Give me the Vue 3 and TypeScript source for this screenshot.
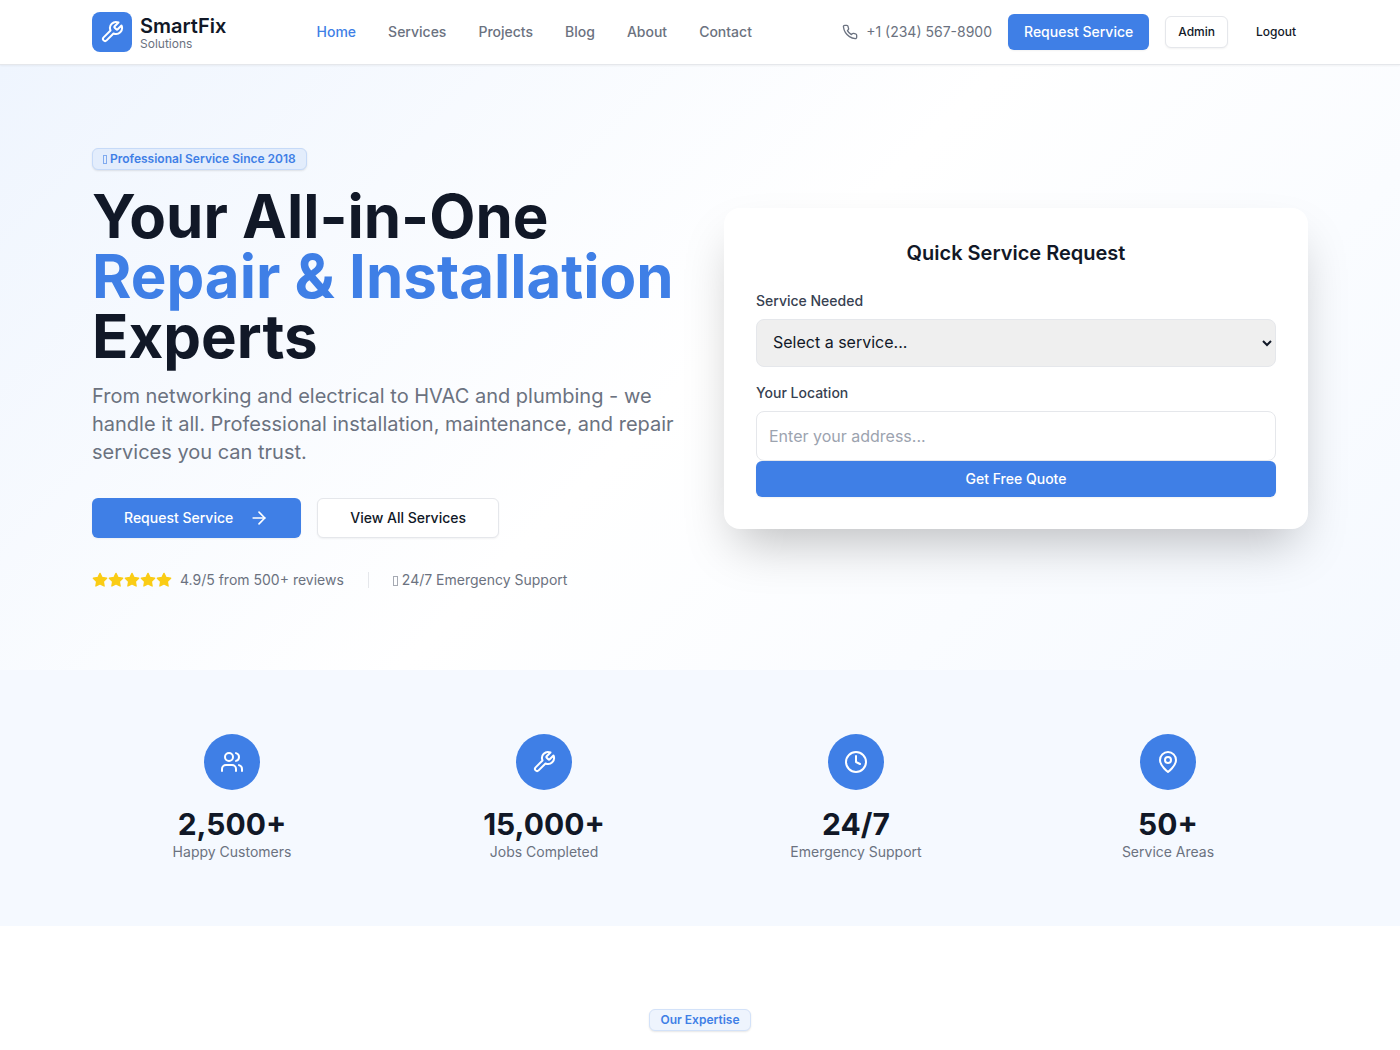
<template>
  <div class="page">
    <header class="site-header">
      <div class="container header-row">
        <a class="brand" href="#">
          <span class="brand-mark">
            <svg width="24" height="24" viewBox="0 0 24 24" class="icon"><path :d="wrenchPath" /></svg>
          </span>
          <span class="brand-text">
            <span class="brand-name">SmartFix</span>
            <span class="brand-sub">Solutions</span>
          </span>
        </a>
        <nav class="main-nav">
          <a
            v-for="(item, i) in navItems"
            :key="item"
            href="#"
            :class="['nav-link', { active: i === 0 }]"
          >{{ item }}</a>
        </nav>
        <div class="header-actions">
          <span class="phone">
            <svg width="16" height="16" viewBox="0 0 24 24" class="icon"><path :d="phonePath" /></svg>
            +1 (234) 567-8900
          </span>
          <button class="btn btn-primary btn-header">Request Service</button>
          <button class="btn btn-outline btn-small">Admin</button>
          <button class="btn btn-ghost btn-small">Logout</button>
        </div>
      </div>
    </header>

    <section class="hero">
      <div class="container hero-grid">
        <div class="hero-copy">
          <div class="badge-line">
            <span class="badge"><i class="tofu tofu-small"></i>Professional Service Since 2018</span>
          </div>
          <h1 class="hero-title">
            Your All-in-One
            <span class="accent">Repair &amp; Installation</span>
            Experts
          </h1>
          <p class="hero-text">
            From networking and electrical to HVAC and plumbing - we handle it all. Professional
            installation, maintenance, and repair services you can trust.
          </p>
          <div class="hero-buttons">
            <button class="btn btn-primary btn-large">
              Request Service
              <svg width="20" height="20" viewBox="0 0 24 24" class="icon"><path d="M5 12h14" /><path d="m12 5 7 7-7 7" /></svg>
            </button>
            <button class="btn btn-outline btn-large">View All Services</button>
          </div>
          <div class="hero-meta">
            <div class="rating">
              <span class="stars">
                <svg v-for="n in 5" :key="n" width="16" height="16" viewBox="0 0 24 24" class="star">
                  <polygon points="12 2 15.09 8.26 22 9.27 17 14.14 18.18 21.02 12 17.77 5.82 21.02 7 14.14 2 9.27 8.91 8.26 12 2" />
                </svg>
              </span>
              <span>4.9/5 from 500+ reviews</span>
            </div>
            <span class="meta-divider"></span>
            <span class="emergency"><i class="tofu"></i>24/7 Emergency Support</span>
          </div>
        </div>

        <form class="quote-card" @submit.prevent>
          <h2 class="quote-title">Quick Service Request</h2>
          <label class="field-label" for="service">Service Needed</label>
          <select id="service" class="field-select">
            <option>Select a service...</option>
          </select>
          <label class="field-label second" for="location">Your Location</label>
          <input id="location" class="field-input" type="text" placeholder="Enter your address..." />
          <button class="btn btn-primary btn-quote">Get Free Quote</button>
        </form>
      </div>
    </section>

    <section class="stats">
      <div class="container stats-grid">
        <div v-for="stat in stats" :key="stat.label" class="stat">
          <span class="stat-icon">
            <svg width="24" height="24" viewBox="0 0 24 24" class="icon">
              <path v-for="d in stat.paths" :key="d" :d="d" />
              <circle v-for="c in stat.circles" :key="c.join()" :cx="c[0]" :cy="c[1]" :r="c[2]" />
            </svg>
          </span>
          <div class="stat-value">{{ stat.value }}</div>
          <div class="stat-label">{{ stat.label }}</div>
        </div>
      </div>
    </section>

    <section class="services">
      <div class="services-head"><span class="badge badge-soft">Our Expertise</span></div>
    </section>
  </div>
</template>

<script setup lang="ts">
interface Stat {
  value: string
  label: string
  paths: string[]
  circles: number[][]
}

const wrenchPath =
  'M14.7 6.3a1 1 0 0 0 0 1.4l1.6 1.6a1 1 0 0 0 1.4 0l3.77-3.77a6 6 0 0 1-7.94 7.94l-6.91 6.91a2.12 2.12 0 0 1-3-3l6.91-6.91a6 6 0 0 1 7.94-7.94l-3.76 3.76z'
const phonePath =
  'M22 16.92v3a2 2 0 0 1-2.18 2 19.79 19.79 0 0 1-8.63-3.07 19.5 19.5 0 0 1-6-6 19.79 19.79 0 0 1-3.07-8.67A2 2 0 0 1 4.11 2h3a2 2 0 0 1 2 1.72 12.84 12.84 0 0 0 .7 2.81 2 2 0 0 1-.45 2.11L8.09 9.91a16 16 0 0 0 6 6l1.27-1.27a2 2 0 0 1 2.11-.45 12.84 12.84 0 0 0 2.81.7A2 2 0 0 1 22 16.92z'

const navItems = ['Home', 'Services', 'Projects', 'Blog', 'About', 'Contact']

const stats: Stat[] = [
  {
    value: '2,500+',
    label: 'Happy Customers',
    paths: ['M16 21v-2a4 4 0 0 0-4-4H6a4 4 0 0 0-4 4v2', 'M22 21v-2a4 4 0 0 0-3-3.87', 'M16 3.13a4 4 0 0 1 0 7.75'],
    circles: [[9, 7, 4]],
  },
  { value: '15,000+', label: 'Jobs Completed', paths: [wrenchPath], circles: [] },
  { value: '24/7', label: 'Emergency Support', paths: ['M12 6v6l4 2'], circles: [[12, 12, 10]] },
  {
    value: '50+',
    label: 'Service Areas',
    paths: ['M20 10c0 6-8 12-8 12s-8-6-8-12a8 8 0 0 1 16 0Z'],
    circles: [[12, 10, 3]],
  },
]
</script>

<style>
body {
  background: #fff;
}
</style>

<style scoped>
.page {
  font-family: Inter, "Noto Sans", sans-serif;
  color: #111827;
}

.container {
  max-width: 1216px;
  margin: 0 auto;
}

.icon {
  fill: none;
  stroke: currentColor;
  stroke-width: 2;
  stroke-linecap: round;
  stroke-linejoin: round;
  flex-shrink: 0;
}

.site-header {
  background: #fff;
  border-bottom: 1px solid #e5e7eb;
  box-shadow: 0 1px 2px rgba(0, 0, 0, 0.05);
  position: relative;
}

.header-row {
  height: 64px;
  display: flex;
  align-items: center;
  justify-content: space-between;
}

.brand {
  display: flex;
  align-items: center;
  gap: 8px;
  text-decoration: none;
  color: inherit;
}

.brand-mark {
  width: 40px;
  height: 40px;
  border-radius: 8px;
  background: #3f7fe6;
  color: #fff;
  display: flex;
  align-items: center;
  justify-content: center;
}

.brand-text {
  display: flex;
  flex-direction: column;
}

.brand-name {
  font-size: 20px;
  font-weight: 600;
  line-height: 24px;
  color: #111827;
}

.brand-sub {
  font-size: 12px;
  line-height: 12px;
  color: #6b7280;
}

.main-nav {
  display: flex;
  gap: 32px;
}

.nav-link {
  font-size: 14px;
  line-height: 20px;
  font-weight: 500;
  color: #6b7280;
  text-decoration: none;
}

.nav-link.active {
  color: #3f7fe6;
}

.header-actions {
  display: flex;
  align-items: center;
  gap: 16px;
}

.phone {
  display: flex;
  align-items: center;
  gap: 8px;
  font-size: 14px;
  line-height: 20px;
  color: #6b7280;
}

.btn {
  display: inline-flex;
  align-items: center;
  justify-content: center;
  font-family: inherit;
  font-weight: 500;
  line-height: 20px;
  border-radius: 6px;
  border: none;
  cursor: pointer;
  white-space: nowrap;
}

.btn-primary {
  background: #3f7fe6;
  color: #fff;
  box-shadow: 0 1px 2px rgba(0, 0, 0, 0.05);
}

.btn-outline {
  background: #fff;
  color: #111827;
  border: 1px solid #e5e7eb;
  box-shadow: 0 1px 2px rgba(0, 0, 0, 0.05);
}

.btn-ghost {
  background: transparent;
  color: #111827;
}

.btn-header {
  height: 36px;
  padding: 0 16px;
  font-size: 14px;
}

.btn-small {
  height: 32px;
  padding: 0 12px;
  font-size: 12px;
}

.btn-large {
  height: 40px;
  padding: 0 32px;
  font-size: 14px;
  gap: 16px;
}

.hero {
  height: 605px;
  box-sizing: border-box;
  padding: 80px 0;
  background: linear-gradient(135deg, #eff5fe 0%, #ffffff 50%, #f5f9ff 100%);
}

.hero-grid {
  display: grid;
  grid-template-columns: 1fr 1fr;
  gap: 48px;
  align-items: center;
}

.badge-line {
  height: 25px;
  margin-bottom: 16px;
  display: flex;
  align-items: flex-end;
}

.badge {
  display: inline-block;
  font-size: 12px;
  font-weight: 600;
  line-height: 16px;
  padding: 2px 10px;
  border-radius: 6px;
  color: #3f7fe6;
  background: #e3edfc;
  border: 1px solid #c6daf8;
  box-shadow: 0 1px 2px rgba(0, 0, 0, 0.1);
}

/* emoji that the reference has no font for: a thin empty box */
.tofu {
  display: inline-block;
  box-sizing: border-box;
  width: 5px;
  height: 10px;
  margin-right: 4px;
  border: 1px solid currentColor;
  opacity: 0.6;
  vertical-align: -1px;
}

.tofu-small {
  width: 4px;
  height: 9px;
  margin-right: 3px;
}

.hero-title {
  margin: 0 0 16px;
  font-size: 60px;
  line-height: 60px;
  font-weight: 700;
  color: #111827;
}

.accent {
  display: block;
  color: #3f7fe6;
}

.hero-text {
  margin: 0 0 32px;
  font-size: 20px;
  line-height: 28px;
  color: #6b7280;
}

.hero-buttons {
  display: flex;
  gap: 16px;
  margin-bottom: 32px;
}

.hero-meta {
  display: flex;
  align-items: center;
  gap: 24px;
  margin-bottom: 2px;
  font-size: 14px;
  line-height: 20px;
  color: #6b7280;
}

.rating {
  display: flex;
  align-items: center;
  gap: 8px;
}

.stars {
  display: flex;
}

.star {
  fill: #facc15;
  stroke: #facc15;
  stroke-width: 2;
  stroke-linejoin: round;
}

.meta-divider {
  width: 1px;
  height: 16px;
  background: #e5e7eb;
}

.quote-card {
  background: #fff;
  border-radius: 16px;
  padding: 32px;
  display: flex;
  flex-direction: column;
  box-shadow: 0 25px 50px -12px rgba(0, 0, 0, 0.25);
}

.quote-title {
  margin: 0 0 24px;
  text-align: center;
  font-size: 20px;
  line-height: 27px;
  font-weight: 600;
  color: #111827;
}

.field-label {
  font-size: 14px;
  line-height: 20px;
  font-weight: 500;
  color: #374151;
  margin-bottom: 8px;
}

.field-label.second {
  margin-top: 16px;
}

.field-select {
  height: 48px;
  padding: 0 12px 2px;
  font-family: inherit;
  font-size: 16px;
  color: #111827;
  background-color: #efefef;
  border: 1px solid #e5e7eb;
  border-radius: 8px;
}

.field-input {
  height: 50px;
  box-sizing: border-box;
  padding: 0 12px;
  font-family: inherit;
  font-size: 16px;
  color: #111827;
  background: #fff;
  border: 1px solid #e5e7eb;
  border-radius: 8px;
}

.field-input::placeholder {
  color: #9ca3af;
}

.btn-quote {
  height: 36px;
  font-size: 14px;
}

.stats {
  height: 256px;
  box-sizing: border-box;
  padding: 64px 0;
  background: #f5f9ff;
}

.stats-grid {
  display: grid;
  grid-template-columns: repeat(4, 1fr);
  gap: 32px;
}

.stat {
  display: flex;
  flex-direction: column;
  align-items: center;
}

.stat-icon {
  width: 56px;
  height: 56px;
  border-radius: 50%;
  background: #3f7fe6;
  color: #fff;
  display: flex;
  align-items: center;
  justify-content: center;
  margin-bottom: 16px;
}

.stat-value {
  font-size: 30px;
  line-height: 36px;
  font-weight: 700;
  color: #111827;
}

.stat-label {
  font-size: 14px;
  line-height: 20px;
  color: #6b7280;
}

.services {
  padding: 80px 0 40px;
}

.services-head {
  display: flex;
  justify-content: center;
  padding-top: 3px;
}

.badge-soft {
  background: #eef4fd;
  border-color: #d3e2f9;
}
</style>
